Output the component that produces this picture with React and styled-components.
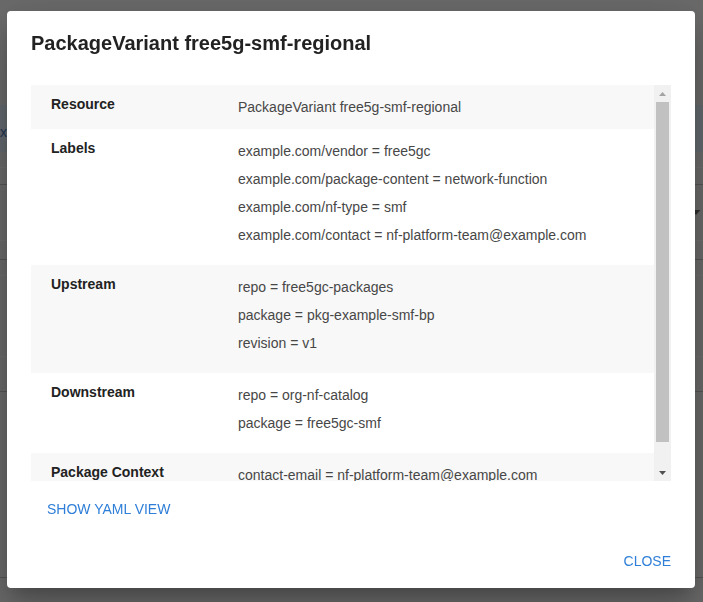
import React from "react";
import styled, { createGlobalStyle } from "styled-components";

const GlobalStyle = createGlobalStyle`
  html, body {
    margin: 0;
    padding: 0;
    background: #6b6b6b;
    font-family: "Liberation Sans", Arial, sans-serif;
  }
`;

// dimmed page that sits behind the dialog
const Page = styled.div`
  width: 703px;
  height: 602px;
  overflow: hidden;
  padding-top: 105px;
  box-sizing: border-box;
`;

const PageBand = styled.div`
  height: 47px;
  background: #646a70;
  color: #1f3550;
  font-size: 14px;
  display: flex;
  align-items: center;
  padding-top: 6px;
  box-sizing: border-box;
`;

const PageRow = styled.div`
  height: ${(p) => p.h}px;
  border-bottom: 1px solid ${(p) => (p.dark ? "#555" : "#707070")};
  box-sizing: border-box;
  display: flex;
  align-items: center;
  justify-content: flex-end;
  padding-right: 2px;
`;

const Backdrop = styled.div`
  position: fixed;
  inset: 0;
  display: flex;
  align-items: flex-start;
  padding: 11px 0 0 7px;
`;

const Dialog = styled.div`
  width: 688px;
  background: #fff;
  border-radius: 4px;
  box-shadow: 0 11px 15px -7px rgba(0, 0, 0, 0.2), 0 24px 38px 3px rgba(0, 0, 0, 0.14),
    0 9px 46px 8px rgba(0, 0, 0, 0.12);
  display: flex;
  flex-direction: column;
`;

const Title = styled.h2`
  margin: 0;
  padding: 16px 24px;
  font-size: 20px;
  line-height: 32px;
  font-weight: 700;
  color: #222;
`;

const Content = styled.div`
  padding: 10px 24px 8px;
  display: flex;
  flex-direction: column;
  align-items: flex-start;
`;

const Table = styled.div`
  width: 640px;
  height: 396px;
  display: flex;
`;

const Rows = styled.div`
  flex: 1;
  overflow: hidden;
`;

// drawn scrollbar (the headless browser hides native ones)
const ScrollBar = styled.div`
  width: 17px;
  background: #f1f1f1;
  display: flex;
  flex-direction: column;
`;

const Arrow = styled.div`
  height: 17px;
  display: flex;
  align-items: center;
  justify-content: center;
`;

const Track = styled.div`
  flex: 1;
  padding: 0 2px;
  display: flex;
  flex-direction: column;
`;

const Thumb = styled.div`
  height: 340px;
  background: #c1c1c1;
`;

const Row = styled.div`
  display: grid;
  grid-template-columns: 207px 1fr;
  padding: 8px 0 ${(p) => (p.list ? 16 : 8)}px;
  background: ${(p) => (p.shaded ? "#f8f8f8" : "#fff")};
`;

const Key = styled.div`
  padding-left: 20px;
  font-size: 14px;
  line-height: 22px;
  font-weight: 700;
  color: #222;
`;

const Values = styled.div`
  display: flex;
  flex-direction: column;
`;

const Value = styled.div`
  font-size: 14px;
  line-height: 28px;
  color: #474747;
  white-space: nowrap;
`;

const TextButton = styled.button`
  border: 0;
  background: none;
  padding: 6px 8px;
  margin: ${(p) => p.m || 0};
  font-family: "Liberation Sans", Arial, sans-serif;
  font-size: 14px;
  line-height: 24px;
  text-transform: uppercase;
  color: #2f7fd8;
  cursor: pointer;
  border-radius: 4px;
`;

const Actions = styled.div`
  display: flex;
  justify-content: flex-end;
  padding: 8px 16px 9px;
`;

const rows = [
  { key: "Resource", values: ["PackageVariant free5g-smf-regional"] },
  {
    key: "Labels",
    values: [
      "example.com/vendor = free5gc",
      "example.com/package-content = network-function",
      "example.com/nf-type = smf",
      "example.com/contact = nf-platform-team@example.com",
    ],
  },
  {
    key: "Upstream",
    values: ["repo = free5gc-packages", "package = pkg-example-smf-bp", "revision = v1"],
  },
  { key: "Downstream", values: ["repo = org-nf-catalog", "package = free5gc-smf"] },
  { key: "Package Context", values: ["contact-email = nf-platform-team@example.com"], list: true },
];

const Tri = ({ up, color, w = 7, h = 4 }) => (
  <svg width={w} height={h} viewBox="0 0 7 4">
    <path d={up ? "M0 4 L3.5 0 L7 4 Z" : "M0 0 L7 0 L3.5 4 Z"} fill={color} />
  </svg>
);

export default function App() {
  return (
    <>
      <GlobalStyle />
      <Page>
        <PageBand>x</PageBand>
        <PageRow h={16} />
        <PageRow h={17} dark />
        <PageRow h={56}>
          <Tri color="#2e2e2e" w={10} h={5} />
        </PageRow>
        <PageRow h={19} dark />
        <PageRow h={16} />
        <PageRow h={81} />
        <PageRow h={35} dark />
        <PageRow h={186} dark />
      </Page>
      <Backdrop>
        <Dialog role="dialog">
          <Title>PackageVariant free5g-smf-regional</Title>
          <Content>
            <Table>
              <Rows>
                {rows.map((r, i) => (
                  <Row key={r.key} shaded={i % 2 === 0} list={r.list || r.values.length > 1}>
                    <Key>{r.key}</Key>
                    <Values>
                      {r.values.map((v) => (
                        <Value key={v}>{v}</Value>
                      ))}
                    </Values>
                  </Row>
                ))}
              </Rows>
              <ScrollBar>
                <Arrow>
                  <Tri up color="#a3a3a3" />
                </Arrow>
                <Track>
                  <Thumb />
                </Track>
                <Arrow>
                  <Tri color="#505050" />
                </Arrow>
              </ScrollBar>
            </Table>
            <TextButton m="10px 0 0 8px">Show YAML view</TextButton>
          </Content>
          <Actions>
            <TextButton>Close</TextButton>
          </Actions>
        </Dialog>
      </Backdrop>
    </>
  );
}
